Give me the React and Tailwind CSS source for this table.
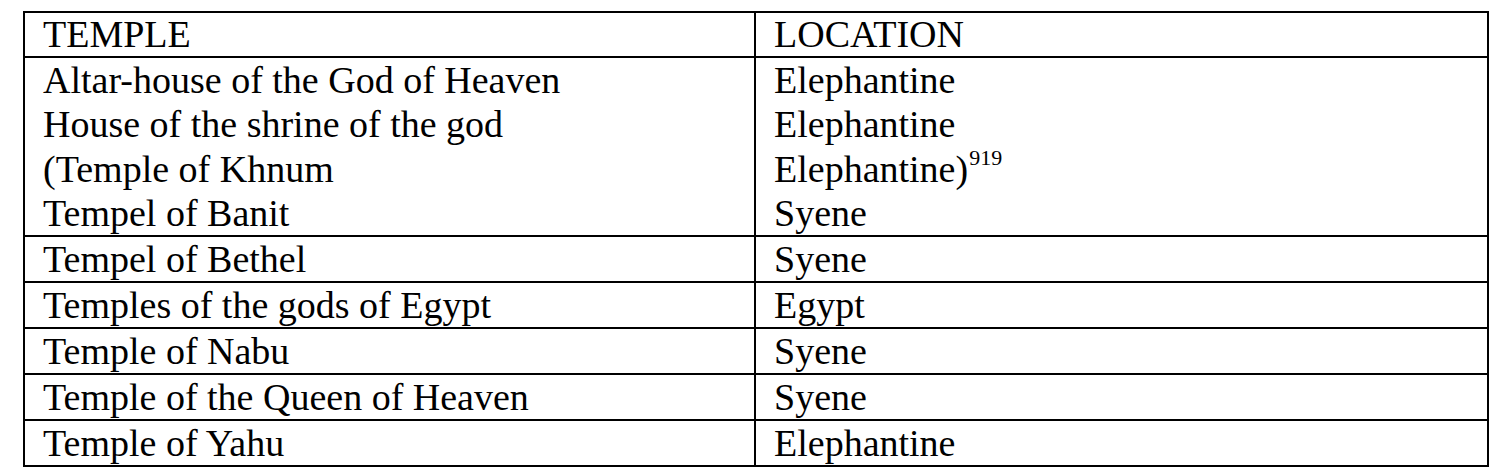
import React from "react";

const block = [
  ["Altar-house of the God of Heaven", "Elephantine"],
  ["House of the shrine of the god", "Elephantine"],
  ["(Temple of Khnum", null],
  ["Tempel of Banit", "Syene"],
];

const rows = [
  ["Tempel of Bethel", "Syene"],
  ["Temples of the gods of Egypt", "Egypt"],
  ["Temple of Nabu", "Syene"],
  ["Temple of the Queen of Heaven", "Syene"],
  ["Temple of Yahu", "Elephantine"],
];

export default function App() {
  return (
    <div className="min-h-screen bg-white pl-[23px] pt-[11px] text-black" style={{ fontFamily: '"Liberation Serif", "Times New Roman", serif' }}>
      <div className="w-[1466px] border-2 border-black text-[38px]">
        {/* header */}
        <div className="grid grid-cols-2 border-b-2 border-black leading-[43px]">
          <div className="h-[43px] border-r-2 border-black pl-[18px]">TEMPLE</div>
          <div className="h-[43px] pl-[18px]">LOCATION</div>
        </div>

        {/* first merged row */}
        <div className="grid grid-cols-2 border-b-2 border-black leading-[44.25px]">
          <div className="h-[177px] border-r-2 border-black pl-[18px]">
            {block.map((r) => (
              <div key={r[0]}>{r[0]}</div>
            ))}
          </div>
          <div className="h-[177px] pl-[18px]">
            <div>Elephantine</div>
            <div>Elephantine</div>
            <div>
              Elephantine)<sup className="relative top-[-17px] ml-[1px] text-[22px] leading-none">919</sup>
            </div>
            <div>Syene</div>
          </div>
        </div>

        {rows.map((r, i) => (
          <div
            key={r[0]}
            className={
              i < rows.length - 1
                ? "grid grid-cols-2 border-b-2 border-black leading-[44px]"
                : "grid grid-cols-2 leading-[44px]"
            }
          >
            <div className="h-[44px] border-r-2 border-black pl-[18px]">{r[0]}</div>
            <div className="h-[44px] pl-[18px]">{r[1]}</div>
          </div>
        ))}
      </div>
    </div>
  );
}
